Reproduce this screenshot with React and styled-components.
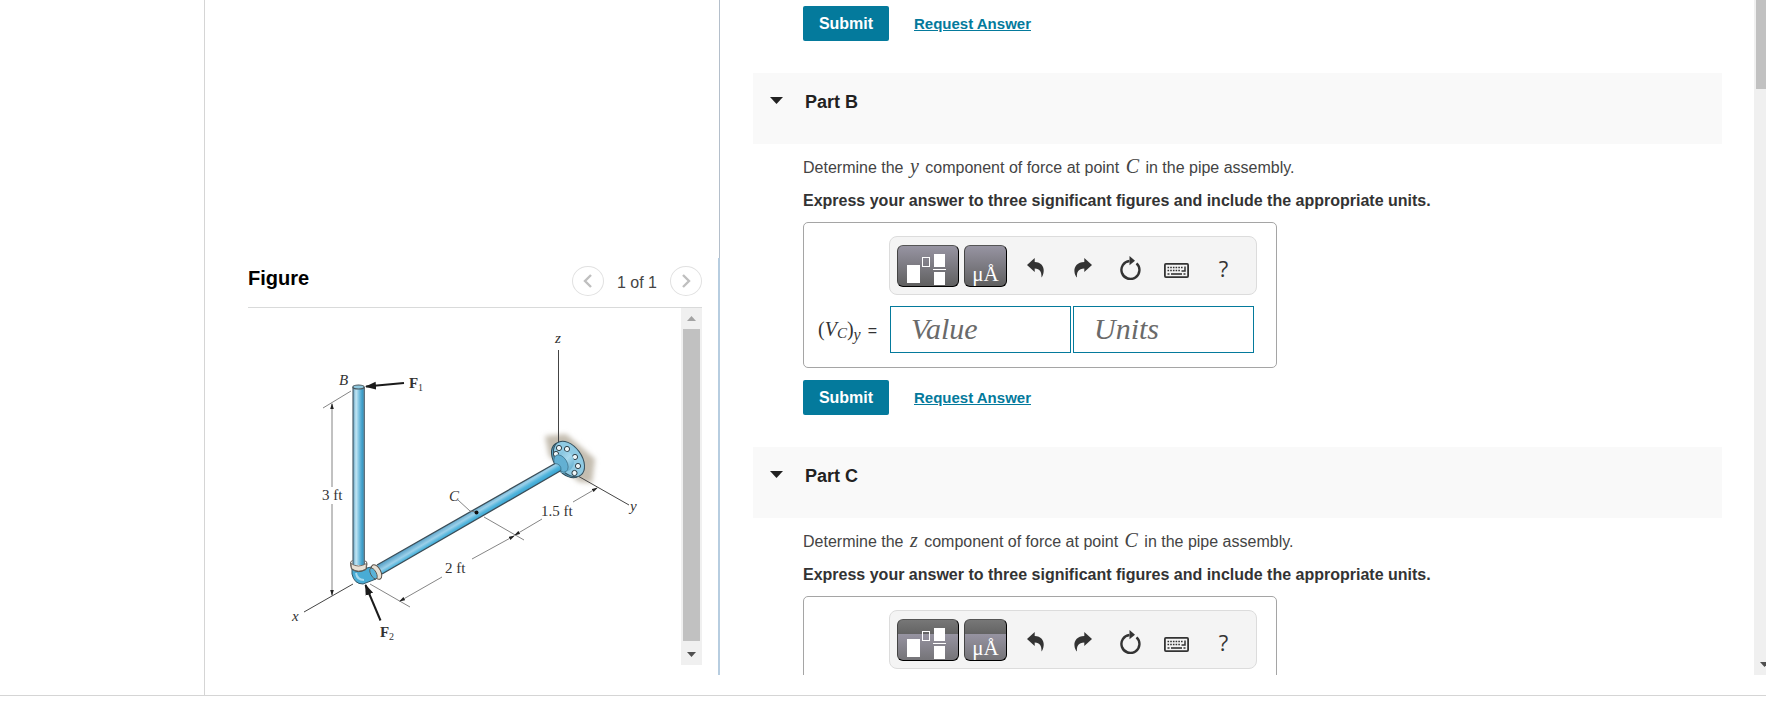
import React, { useState } from "react";
import styled, { createGlobalStyle, css } from "styled-components";

const GlobalStyle = createGlobalStyle`
  * { box-sizing: border-box; }
  body { margin: 0; background: #fff; font-family: "Liberation Sans", Arial, sans-serif; font-size: 16px; color: #333; }
  button, input { font-family: inherit; }
`;

/* ─── Page shell ──────────────────────────────────────────────── */
const Page = styled.div`
  height: 100vh; padding-bottom: 12px; overflow: hidden;
`;

const Shell = styled.div`
  display: flex; height: 100%;
  border-bottom: 1px solid #d5d5d5;
`;

const SideRail = styled.aside`
  flex: 0 0 205px;
  border-right: 1px solid #d5d5d5;
`;

const Workspace = styled.div`
  display: flex; flex: 1; min-width: 0;
  margin-bottom: 20px;
`;

/* ─── Figure panel ────────────────────────────────────────────── */
const FigureColumn = styled.section`
  flex: 0 0 515px;
  display: flex; flex-direction: column;
`;

const ProblemArea = styled.div`
  flex: 0 0 258px;
  border-right: 1px solid #b4bfcb;
`;

const FigureArea = styled.div`
  flex: 1; min-height: 0;
  display: flex; flex-direction: column;
  padding: 0 16px 10px 43px;
  border-right: 2px solid #b7cde0;
`;

const FigureHeader = styled.header`
  display: flex; align-items: flex-start; justify-content: space-between;
  flex: 0 0 50px; padding-top: 8px;
  border-bottom: 1px solid #d9dada;
`;

const FigureTitle = styled.h2`
  margin: 0;
  font-size: 20px; line-height: 24px; font-weight: 700; color: #000;
`;

const Pager = styled.div`
  display: flex; align-items: center; gap: 13px;
  font-size: 16px; line-height: 20px; color: #444;
`;

const PageCount = styled.span`
  padding-top: 4px;
`;

const PagerButton = styled.button`
  display: flex; align-items: center; justify-content: center;
  width: 32px; height: 30px; padding: 0;
  border: 1px solid #e1e1e1; border-radius: 50%;
  background: #fff; color: #bfbfbf; cursor: pointer;
`;

const FigureViewer = styled.div`
  flex: 1; min-height: 0;
  display: flex; overflow: hidden;
`;

const Canvas = styled.div`
  flex: 1; min-width: 0;
  svg { display: block; }
`;

/* ─── Scroll bars ─────────────────────────────────────────────── */
const Track = styled.div`
  display: flex; flex-direction: column;
  flex: 0 0 ${({ $cut }) => ($cut ? "12px" : "21px")};
  padding-left: 2px; overflow: hidden;
  background: #f0f0f0;
`;

const TrackArrow = styled.span`
  display: flex; align-items: center; justify-content: center;
  width: 17px; height: 21px; flex-shrink: 0;
  color: ${({ $dim }) => ($dim ? "#a3a3a3" : "#505050")};
`;

const Thumb = styled.div`
  width: 17px;
  flex: ${({ $short }) => ($short ? "0 0 89px" : "1")};
  margin-bottom: ${({ $short }) => ($short ? "auto" : "3px")};
  background: #c1c1c1;
`;

/* ─── Question parts ──────────────────────────────────────────── */
const Questions = styled.main`
  flex: 1; min-width: 0; overflow: hidden;
  padding: 6px 32px 0 33px;
`;

const PartHeader = styled.button`
  display: flex; align-items: flex-start; gap: 22px;
  width: 100%; height: 71px; padding: 19px 17px;
  border: 0; background: #f9f9f9; cursor: pointer;
  font-size: 18px; line-height: 20px; font-weight: 700; color: #222;
  svg { margin-top: 5px; }
`;

const PartBody = styled.div`
  padding: 14px 0 0 50px;
`;

const Prompt = styled.p`
  margin: 0 0 13px;
  line-height: 20px; color: #444;
`;

const Instruction = styled.p`
  margin: 0 0 11px;
  line-height: 20px; font-weight: 700; color: #333;
`;

const MathVar = styled.i`
  margin: 0 2px;
  font-family: "Liberation Serif", "Times New Roman", serif;
  font-size: 20px; line-height: 0;
`;

const Actions = styled.div`
  display: flex; align-items: center; gap: 25px;
  padding-left: ${({ $indent }) => ($indent ? "50px" : "0")};
  margin: 0 0 32px;
`;

const SubmitButton = styled.button`
  width: 86px; height: 35px; padding: 0;
  border: 0; border-radius: 2px;
  background: #047a9c; color: #fff; cursor: pointer;
  font-size: 16px; font-weight: 700;
`;

const AnswerLink = styled.a`
  font-size: 15px; font-weight: 700; color: #047a9c;
  text-decoration: underline;
`;

/* ─── Answer editor ───────────────────────────────────────────── */
const Editor = styled.div`
  width: 474px; max-width: 100%; min-height: 146px;
  margin-bottom: 12px; padding: 13px 0 14px;
  border: 1px solid #a5a5a5; border-radius: 5px;
`;

const Toolbar = styled.div`
  display: flex; align-items: center;
  width: 368px; height: 59px; margin-left: 85px; padding-left: 7px;
  border: 1px solid #dcdcdc; border-radius: 8px;
  background: #f4f4f4;
`;

const PaletteButton = styled.button`
  display: flex; align-items: center; justify-content: center;
  width: ${({ $wide }) => ($wide ? "62px" : "43px")}; height: 42px;
  margin-right: 5px; padding: 0; overflow: hidden;
  border: 1px solid #000; border-top-color: #555; border-left-color: #444; border-radius: 6px;
  color: #fff; cursor: pointer;
  background: linear-gradient(#9794a2, #606060);
  ${({ $split }) => $split && css`
    background: linear-gradient(#777, #646464 34%, #9794a2 34%, #757478);
  `}
`;

const UnitGlyphs = styled.span`
  padding-top: 16px;
  font-family: "Liberation Serif", "Times New Roman", serif;
  font-size: 21px; line-height: 24px;
`;

const IconButton = styled.button`
  display: flex; align-items: center; justify-content: center;
  width: 47px; height: 42px;
  padding: ${({ $low }) => ($low ? "10px 0 0" : "4px 0 0")};
  border: 0; background: none; color: #333; cursor: pointer;
`;

const HelpMark = styled.span`
  font-family: "Open Sans", sans-serif;
  font-size: 22px; line-height: 24px;
`;

const AnswerRow = styled.div`
  display: flex; align-items: center; gap: 2px;
  margin-top: 11px; padding-left: 14px;
`;

const AnswerLabel = styled.label`
  width: 70px; white-space: nowrap;
  font-family: "Liberation Serif", "Times New Roman", serif;
  font-size: 20px; line-height: 24px;
`;

const Subscript = styled.sub`
  font-size: ${({ $small }) => ($small ? "15px" : "16px")};
  font-style: italic; line-height: 0;
  vertical-align: ${({ $small }) => ($small ? "-2px" : "-4px")};
`;

const Equals = styled.span`
  margin-left: 7px;
  font-family: "Liberation Sans", Arial, sans-serif; font-size: 16px;
`;

const AnswerInput = styled.input`
  width: 181px; height: 47px; padding: 0 20px 1px;
  border: 1px solid #047a9c; background: #fff;
  font-family: "Liberation Serif", "Times New Roman", serif;
  font-size: 30px; font-style: italic; color: #333;
  &::placeholder { color: #6a6a6a; opacity: 1; }
`;

/* ─── Figure drawing ──────────────────────────────────────────── */
const Lettering = styled.text`
  font-family: "Liberation Serif", "Times New Roman", serif;
  font-size: ${({ $sub }) => ($sub ? "10px" : "15px")};
  font-style: ${({ $italic }) => ($italic ? "italic" : "normal")};
  font-weight: ${({ $bold }) => ($bold ? 700 : 400)};
  fill: #333;
`;

const BOLTS = [[559, 448], [567, 449], [575, 457], [578, 466], [574.5, 473], [556, 454]];

const PipeFigure = () => (
  <svg width="433" height="357" viewBox="248 308 433 357" role="img" aria-label="Pipe assembly">
    <defs>
      <linearGradient id="pipeV" x1="0" x2="1" y1="0" y2="0">
        <stop offset="0" stopColor="#5f9fc0" />
        <stop offset="0.28" stopColor="#c3e6f4" />
        <stop offset="0.6" stopColor="#6fbbdd" />
        <stop offset="0.85" stopColor="#3a9cc8" />
        <stop offset="1" stopColor="#5aa5c6" />
      </linearGradient>
      <linearGradient id="pipeD" gradientUnits="userSpaceOnUse" x1="470" y1="511" x2="476" y2="521">
        <stop offset="0" stopColor="#5fa6cb" />
        <stop offset="0.4" stopColor="#9cd0e9" />
        <stop offset="0.7" stopColor="#4fb4dc" />
        <stop offset="1" stopColor="#39a2d0" />
      </linearGradient>
      <linearGradient id="hub" x1="0" x2="1" y1="0" y2="1">
        <stop offset="0" stopColor="#6fb7d6" />
        <stop offset="0.5" stopColor="#a9d9ed" />
        <stop offset="1" stopColor="#4a9fc4" />
      </linearGradient>
      <filter id="soft" x="-30%" y="-30%" width="160%" height="160%">
        <feGaussianBlur stdDeviation="2.5" />
      </filter>
      <marker id="tip" orient="auto" markerUnits="userSpaceOnUse" markerWidth="6" markerHeight="4" refX="5" refY="2" viewBox="0 0 6 4">
        <path d="M6 2 0 3.8V.2Z" fill="#222" />
      </marker>
      <marker id="force" orient="auto" markerUnits="userSpaceOnUse" markerWidth="12" markerHeight="10" refX="10" refY="5" viewBox="0 0 12 10">
        <path d="M11 5 0 9V1Z" fill="#1b1b1b" />
      </marker>
    </defs>

    {/* wall shadow and flange */}
    <path d="M545 436 566 434 595 459 592 483 579 482 549 456Z" fill="#c4bdb0" filter="url(#soft)" />
    <path d="M558.5 350V446M578 476 629 505" stroke="#444" fill="none" />
    <ellipse cx="567" cy="460" rx="20" ry="12.5" transform="rotate(54 567 460)" fill="#5aa2c2" stroke="#2d4957" />
    <ellipse cx="569" cy="459" rx="20" ry="12.5" transform="rotate(54 569 459)" fill="#8fcae3" stroke="#34505e" />
    {BOLTS.map(([x, y]) => (
      <circle key={`${x}-${y}`} cx={x} cy={y} r="2.6" fill="#eef6f9" stroke="#2d3f48" />
    ))}
    <path d="M557 456C561 451 567 450 571 454 576 460 574 467 570 470L564 473C557 473 551 463 557 456Z" fill="url(#hub)" />
    <ellipse cx="561" cy="463.500" rx="9.500" ry="6" transform="rotate(58 561 463.5)" fill="#63b0d3" stroke="#3b6f87" strokeWidth="0.7" />

    {/* pipes */}
    <path d="M377 565 555 463.5Q561 464 561 470.5L382 574Z" fill="url(#pipeD)" />
    <path d="M377 565 555 463.5M382 574 561 470.5" stroke="#3b4d57" strokeWidth="1.3" />
    <path d="M555 463.5Q561.5 464 561 470.5" fill="none" stroke="#3b6f87" strokeWidth="0.8" />
    <path d="M352 568V574Q354 584 363 584L376 579 371 567 363 569Z" fill="#49acd5" stroke="#345767" />
    <path d="M356 573Q357 580 364 580" stroke="#a6d9ee" strokeWidth="2" fill="none" />
    <rect x="353" y="387" width="11" height="178" fill="url(#pipeV)" />
    <path d="M353 387V564M364.3 387V564" stroke="#4e626e" strokeWidth="1.2" />
    <ellipse cx="358.5" cy="387" rx="5.6" ry="2" fill="#8fc8df" stroke="#48565d" strokeWidth="1.2" />
    <path d="M352.500 560.500Q350 561 350.500 564.500L351.500 569Q358 574 366 569.500L367 564Q367 561 365 561" fill="none" stroke="#574e46" strokeWidth="0.9" />
    <path d="M351 563.5Q358 568.5 366.500 563.500L366 569Q358 573.500 351.500 568.500Z" fill="#e8e0d4" stroke="#574e46" strokeWidth="0.8" />
    <ellipse cx="376.5" cy="572" rx="4.200" ry="8" transform="rotate(-28 376.5 572)" fill="#e8e1d5" stroke="#574e46" />
    <ellipse cx="373.5" cy="573.500" rx="2.800" ry="6" transform="rotate(-28 373.5 573.5)" fill="#5bb3d8" stroke="#574e46" strokeWidth="0.8" />

    {/* axes and dimensions */}
    <path d="M304 612 353 584" stroke="#444" />
    <g stroke="#777" strokeWidth="0.9" fill="none">
      <path d="M323 408 351 391M370 584 410 607M484 517 524 540" />
      <path d="M458 500 470 511 476 512" />
      <path d="M332 504V595" markerEnd="url(#tip)" />
      <path d="M332 487V404" markerEnd="url(#tip)" />
      <path d="M442 577 400 601" markerEnd="url(#tip)" />
      <path d="M472 559 514 536" markerEnd="url(#tip)" />
      <path d="M542 519 515 535" markerEnd="url(#tip)" />
      <path d="M573 502 597 488" markerEnd="url(#tip)" />
    </g>
    <circle cx="476.5" cy="512.5" r="2" fill="#111" />
    <path d="M404 383 366 386.6" stroke="#1b1b1b" strokeWidth="2" markerEnd="url(#force)" />
    <path d="M380.5 620.5 365.5 585" stroke="#1b1b1b" strokeWidth="2" markerEnd="url(#force)" />

    <Lettering x="339" y="385" $italic>B</Lettering>
    <Lettering x="409" y="388" $bold>F</Lettering>
    <Lettering x="418" y="391" $sub>1</Lettering>
    <Lettering x="322" y="500">3 ft</Lettering>
    <Lettering x="449" y="501" $italic>C</Lettering>
    <Lettering x="541" y="516">1.5 ft</Lettering>
    <Lettering x="445" y="573">2 ft</Lettering>
    <Lettering x="292" y="621" $italic>x</Lettering>
    <Lettering x="630" y="511" $italic>y</Lettering>
    <Lettering x="555" y="343" $italic>z</Lettering>
    <Lettering x="380" y="637" $bold>F</Lettering>
    <Lettering x="389" y="640" $sub>2</Lettering>
  </svg>
);

/* ─── Icons ───────────────────────────────────────────────────── */
const Chevron = ({ right }) => (
  <svg width="10" height="14" viewBox="0 0 10 14" fill="none" stroke="currentColor" strokeWidth="2.4">
    <path d={right ? "M2 1 8 7 2 13" : "M8 1 2 7 8 13"} />
  </svg>
);

const Triangle = ({ up, width = 9, height = 5 }) => (
  <svg width={width} height={height} viewBox="0 0 10 5" preserveAspectRatio="none" fill="currentColor">
    <path d={up ? "M0 5 5 0 10 5Z" : "M0 0H10L5 5Z"} />
  </svg>
);

const TemplateIcon = () => (
  <svg width="60" height="40" viewBox="1 1 60 40" fill="#fff">
    <rect x="10" y="20" width="13" height="18" />
    <rect x="25.500" y="12.500" width="7" height="9" fill="none" stroke="#fff" />
    <rect x="37" y="9" width="11" height="13" />
    <rect x="36" y="24" width="13" height="1" />
    <rect x="37" y="27" width="11" height="13" />
  </svg>
);

const UndoIcon = () => (
  <svg width="17" height="20" viewBox="0 0 17 20" fill="currentColor">
    <path d="M0 7 7.7 0V4C14 4 17 8.5 16.7 13 16.5 16 15.5 18.5 14.5 19.5 14.7 14 13 10.5 7.7 10.5V14Z" />
  </svg>
);

const RedoIcon = () => (
  <svg width="18" height="20" viewBox="0 0 18 20" fill="currentColor">
    <path d="M18 7 10.3 0V4C3.5 4 .2 8.5 .4 13 .5 16 1.8 18.5 3 19.5 2.5 14 4.5 10.5 10.3 10.5V14Z" />
  </svg>
);

const ResetIcon = () => (
  <svg width="22" height="24" viewBox="0 0 22 24">
    <path d="M17.500 7.300A9 9 0 1 1 10.500 5" fill="none" stroke="currentColor" strokeWidth="2.400" />
    <path d="M10.500 0 16 4.800 10.500 9.200Z" fill="currentColor" />
  </svg>
);

const KeyboardIcon = () => (
  <svg width="25" height="15" viewBox="0 0 25 15">
    <rect x="0.9" y="0.9" width="23.2" height="13.2" rx="1" fill="none" stroke="currentColor" strokeWidth="1.8" />
    <path d="M3.5 4.500H19M3.500 7.500H17" stroke="currentColor" strokeWidth="1.6" strokeDasharray="1.6 1.1" />
    <path d="M7 11H18" stroke="currentColor" strokeWidth="1.6" />
    <path d="M3.500 11H5.500M19.500 11H21.500M21 3.500V8H17.500" fill="none" stroke="currentColor" strokeWidth="1.5" />
  </svg>
);

/* ─── Composite pieces ────────────────────────────────────────── */
const SubmitRow = ({ indent }) => (
  <Actions $indent={indent}>
    <SubmitButton type="button">Submit</SubmitButton>
    <AnswerLink href="#request">Request Answer</AnswerLink>
  </Actions>
);

const MathToolbar = ({ split }) => (
  <Toolbar>
    <PaletteButton type="button" aria-label="Templates" $wide $split={split}><TemplateIcon /></PaletteButton>
    <PaletteButton type="button" aria-label="Units" $split={split}><UnitGlyphs>μÅ</UnitGlyphs></PaletteButton>
    <IconButton type="button" aria-label="Undo"><UndoIcon /></IconButton>
    <IconButton type="button" aria-label="Redo"><RedoIcon /></IconButton>
    <IconButton type="button" aria-label="Reset"><ResetIcon /></IconButton>
    <IconButton type="button" aria-label="Keyboard shortcuts" $low><KeyboardIcon /></IconButton>
    <IconButton type="button" aria-label="Help"><HelpMark>?</HelpMark></IconButton>
  </Toolbar>
);

const AnswerFields = ({ axis }) => (
  <AnswerRow>
    <AnswerLabel htmlFor={`value-${axis}`}>
      (<i>V</i><Subscript $small>C</Subscript>)<Subscript>{axis}</Subscript><Equals>=</Equals>
    </AnswerLabel>
    <AnswerInput id={`value-${axis}`} placeholder="Value" />
    <AnswerInput aria-label="Units" placeholder="Units" />
  </AnswerRow>
);

/* a pending part shows its toolbar before the fields are ready */
const Part = ({ name, axis, pending }) => {
  const [open, setOpen] = useState(true);

  return (
    <section>
      <PartHeader type="button" aria-expanded={open} onClick={() => setOpen(!open)}>
        <Triangle width={13} height={7} />
        {name}
      </PartHeader>
      {open && (
        <PartBody>
          <Prompt>
            Determine the <MathVar>{axis}</MathVar> component of force at point <MathVar>C</MathVar> in the pipe assembly.
          </Prompt>
          <Instruction>Express your answer to three significant figures and include the appropriate units.</Instruction>
          <Editor>
            <MathToolbar split={pending} />
            {!pending && <AnswerFields axis={axis} />}
          </Editor>
          {!pending && <SubmitRow />}
        </PartBody>
      )}
    </section>
  );
};

const App = () => (
  <Page>
    <GlobalStyle />
    <Shell>
      <SideRail />
      <Workspace>
        <FigureColumn>
          <ProblemArea />
          <FigureArea>
            <FigureHeader>
              <FigureTitle>Figure</FigureTitle>
              <Pager>
                <PagerButton type="button" aria-label="Previous figure"><Chevron /></PagerButton>
                <PageCount>1 of 1</PageCount>
                <PagerButton type="button" aria-label="Next figure"><Chevron right /></PagerButton>
              </Pager>
            </FigureHeader>
            <FigureViewer>
              <Canvas><PipeFigure /></Canvas>
              <Track>
                <TrackArrow $dim><Triangle up /></TrackArrow>
                <Thumb />
                <TrackArrow><Triangle /></TrackArrow>
              </Track>
            </FigureViewer>
          </FigureArea>
        </FigureColumn>

        <Questions>
          <SubmitRow indent />
          <Part name="Part B" axis="y" />
          <Part name="Part C" axis="z" pending />
        </Questions>
        <Track $cut>
          <Thumb $short />
          <TrackArrow><Triangle /></TrackArrow>
        </Track>
      </Workspace>
    </Shell>
  </Page>
);

export default App;
